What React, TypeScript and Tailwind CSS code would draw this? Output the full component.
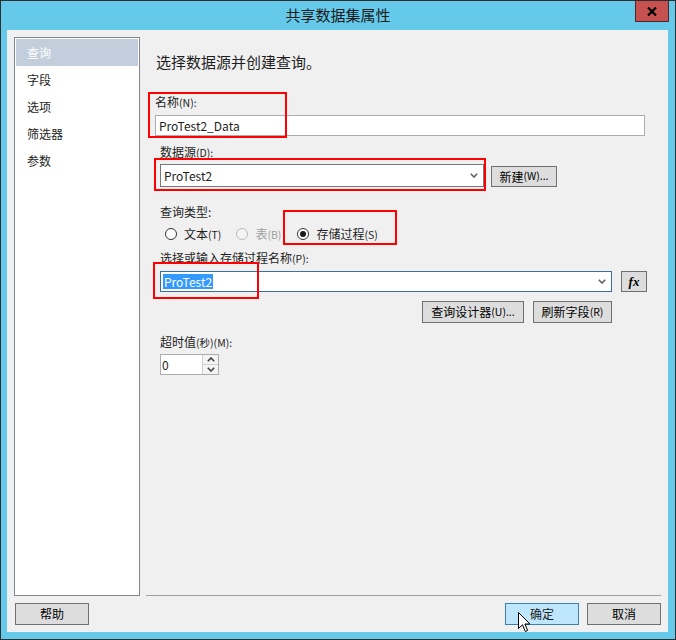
import React from "react";

const Chevron = ({ up = false, color = "#606060" }: { up?: boolean; color?: string }) => (
  <svg width="8" height="5" viewBox="0 0 8 5">
    <path
      d={up ? "M0.8 4.2 L4 1 L7.2 4.2" : "M0.8 0.8 L4 4 L7.2 0.8"}
      fill="none"
      stroke={color}
      strokeWidth="1.6"
    />
  </svg>
);

const Radio = ({ checked = false, disabled = false }: { checked?: boolean; disabled?: boolean }) => (
  <span
    className={`flex h-[12px] w-[12px] items-center justify-center rounded-full border ${
      disabled ? "border-[#bcbcbc] bg-[#f4f4f4]" : "border-[#333333] bg-white"
    }`}
  >
    {checked && <span className="h-[6px] w-[6px] rounded-full bg-[#1a1a1a]" />}
  </span>
);

const Btn = ({ children, className = "" }: { children: React.ReactNode; className?: string }) => (
  <div
    className={`flex items-center justify-center border border-[#707070] bg-[#dddddd] text-[12px] leading-none text-black ${className}`}
  >
    {children}
  </div>
);

const Small = ({ children }: { children: React.ReactNode }) => (
  <span className="text-[10.5px]">{children}</span>
);

const navItems = ["查询", "字段", "选项", "筛选器", "参数"];

export default function App() {
  return (
    <div className="h-[640px] w-[676px] border border-[#2e2e2e] bg-[#65c9e9] font-['Noto_Sans_CJK_SC',sans-serif] text-[#1e1e1e] relative">
      {/* title bar */}
      <div className="flex h-[29px] items-center justify-center text-[15px] text-[#1b1b1b]">
        共享数据集属性
      </div>
      <div className="absolute right-[6px] top-0 flex h-[21px] w-[34px] items-center justify-center border border-t-0 border-[#4a2a2a] bg-[#c75050]">
        <svg width="10" height="9" viewBox="0 0 10 9">
          <path d="M1 0.5 L9 8.5 M9 0.5 L1 8.5" stroke="#000" strokeWidth="2.2" />
        </svg>
      </div>

      {/* client area */}
      <div className="mx-[6px] mr-[7px] flex h-[602px] flex-col bg-[#f0f0f0] px-[7px] pt-[7px]">
        <div className="flex">
          <div className="h-[559px] w-[126px] border border-[#828790] bg-white p-px">
            {navItems.map((item, i) => (
              <div
                key={item}
                className={`flex h-[27px] items-center pl-[11px] text-[12px] ${
                  i === 0 ? "bg-[#c2cedb] text-white" : "text-[#1e1e1e]"
                }`}
              >
                {item}
              </div>
            ))}
          </div>

          <div className="relative ml-[6px] flex h-[559px] flex-1 flex-col border-b border-[#a0a0a0]">
            <div className="ml-[10px] mt-[15px] h-[20px] text-[15px] leading-[20px]">选择数据源并创建查询。</div>

            <div className="ml-[9px] mt-[22px] h-[16px] text-[12px] leading-[16px]">
              名称<Small>(N):</Small>
            </div>
            <div className="ml-[9px] mt-[5px] flex h-[21px] w-[490px] items-center border border-[#abadb3] bg-white pl-[3px] text-[12px]">
              ProTest2_Data
            </div>

            <div className="ml-[14px] mt-[8px] h-[16px] text-[12px] leading-[16px]">
              数据源<Small>(D):</Small>
            </div>
            <div className="ml-[14px] mt-[4px] flex h-[23px] items-center">
              <div className="flex h-[23px] w-[324px] items-center justify-between border border-[#7a7a7a] bg-white pl-[3px] pr-[5px] text-[12px]">
                <span>ProTest2</span>
                <Chevron />
              </div>
              <Btn className="ml-[7px] mt-[2px] h-[21px] w-[66px]">
                新建<Small>(W)...</Small>
              </Btn>
            </div>

            <div className="ml-[14px] mt-[17px] h-[16px] text-[12px] leading-[16px]">查询类型:</div>
            <div className="ml-[19px] mt-[6px] flex h-[16px] items-center text-[12px]">
              <Radio />
              <span className="ml-[7px]">
                文本<Small>(T)</Small>
              </span>
              <span className="ml-[15px]">
                <Radio disabled />
              </span>
              <span className="ml-[7px] text-[#a0a0a0]">
                表<Small>(B)</Small>
              </span>
              <span className="ml-[16px]">
                <Radio checked />
              </span>
              <span className="ml-[7px]">
                存储过程<Small>(S)</Small>
              </span>
            </div>

            <div className="ml-[14px] mt-[8px] h-[16px] text-[12px] leading-[16px]">
              选择或输入存储过程名称<Small>(P):</Small>
            </div>
            <div className="ml-[14px] mt-[5px] flex h-[21px] items-center">
              <div className="flex h-[21px] w-[452px] items-center justify-between border border-[#3c6e9e] bg-white pl-[2px] pr-[5px] text-[12px]">
                <span className="bg-[#3399ff] px-[1px] leading-[15px] text-white">ProTest2</span>
                <Chevron />
              </div>
              <Btn className="ml-[9px] h-[21px] w-[26px]">
                <span className="font-['Liberation_Serif',serif] text-[13px] font-bold italic">fx</span>
              </Btn>
            </div>

            <div className="ml-[276px] mt-[9px] flex h-[22px] items-center gap-[9px]">
              <Btn className="h-[22px] w-[102px]">
                查询设计器<Small>(U)...</Small>
              </Btn>
              <Btn className="h-[22px] w-[79px]">
                刷新字段<Small>(R)</Small>
              </Btn>
            </div>

            <div className="ml-[14px] mt-[11px] h-[16px] text-[12px] leading-[16px]">
              超时值<Small>(秒)(M):</Small>
            </div>
            <div className="ml-[14px] mt-[4px] flex h-[21px] w-[59px] border border-[#abadb3] bg-white">
              <div className="flex flex-1 items-center pl-[1px] text-[12px]">0</div>
              <div className="flex w-[16px] flex-col border-l border-[#d0d0d0]">
                <div className="flex flex-1 items-center justify-center border-b border-[#d0d0d0] bg-[#f4f4f4]">
                  <Chevron up color="#404040" />
                </div>
                <div className="flex flex-1 items-center justify-center bg-[#f4f4f4]">
                  <Chevron color="#404040" />
                </div>
              </div>
            </div>

            {/* red annotation boxes */}
            <div className="absolute left-[2px] top-[55px] h-[46px] w-[139px] border-2 border-[#ff0000]" />
            <div className="absolute left-[8px] top-[121px] h-[33px] w-[332px] border-2 border-[#ff0000]" />
            <div className="absolute left-[137px] top-[173px] h-[35px] w-[114px] border-2 border-[#ff0000]" />
            <div className="absolute left-[7px] top-[225px] h-[37px] w-[106px] border-2 border-[#ff0000]" />
          </div>
        </div>

        <div className="mt-[7px] flex h-[22px] items-center justify-between">
          <Btn className="ml-px h-[22px] w-[74px]">帮助</Btn>
          <div className="flex gap-[8px]">
            <div className="flex h-[22px] w-[74px] items-center justify-center border border-[#3c7fb1] bg-[#bee6fd] text-[12px]">
              确定
            </div>
            <Btn className="h-[22px] w-[74px]">取消</Btn>
          </div>
        </div>
      </div>

      {/* mouse pointer */}
      <svg className="absolute left-[517px] top-[611px]" width="13" height="21" viewBox="0 0 13 21">
        <path
          d="M0.5 0.5 L0.5 16.5 L4.5 12.8 L7.3 19.5 L9.6 18.5 L6.9 12 L12 12 Z"
          fill="#fff"
          stroke="#000"
          strokeWidth="1"
          strokeLinejoin="miter"
        />
      </svg>
    </div>
  );
}
